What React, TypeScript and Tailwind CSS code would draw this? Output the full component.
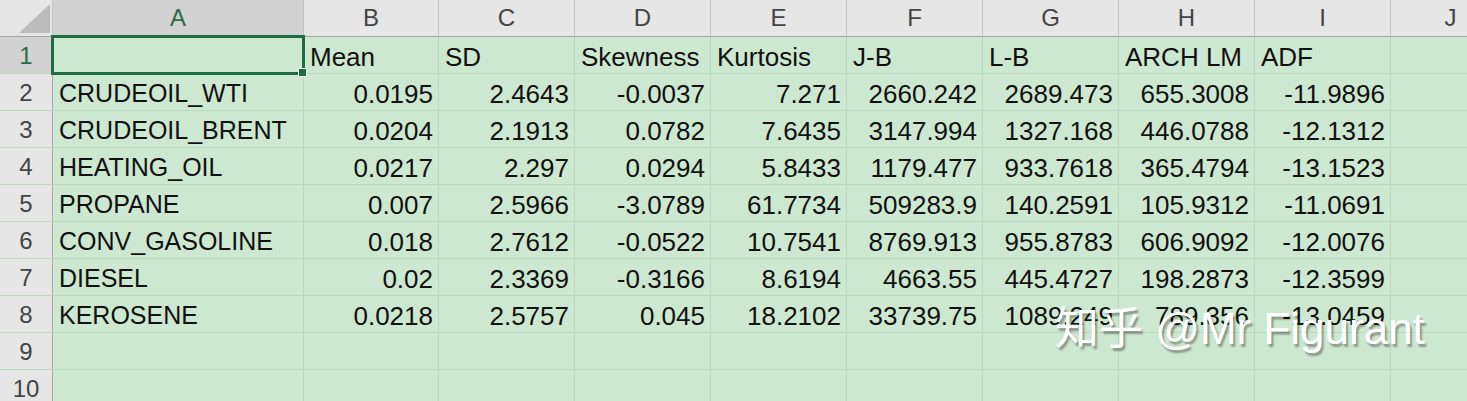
import React from "react";

const cols = ["A", "B", "C", "D", "E", "F", "G", "H", "I", "J"];
const widths = ["w-[251px]", "w-[135px]", "w-[136px]", "w-[136px]", "w-[136px]", "w-[136px]", "w-[136px]", "w-[136px]", "w-[136px]", "w-[120px]"];

const header = ["", "Mean", "SD", "Skewness", "Kurtosis", "J-B", "L-B", "ARCH LM", "ADF", ""];
const data: string[][] = [
  ["CRUDEOIL_WTI", "0.0195", "2.4643", "-0.0037", "7.271", "2660.242", "2689.473", "655.3008", "-11.9896"],
  ["CRUDEOIL_BRENT", "0.0204", "2.1913", "0.0782", "7.6435", "3147.994", "1327.168", "446.0788", "-12.1312"],
  ["HEATING_OIL", "0.0217", "2.297", "0.0294", "5.8433", "1179.477", "933.7618", "365.4794", "-13.1523"],
  ["PROPANE", "0.007", "2.5966", "-3.0789", "61.7734", "509283.9", "140.2591", "105.9312", "-11.0691"],
  ["CONV_GASOLINE", "0.018", "2.7612", "-0.0522", "10.7541", "8769.913", "955.8783", "606.9092", "-12.0076"],
  ["DIESEL", "0.02", "2.3369", "-0.3166", "8.6194", "4663.55", "445.4727", "198.2873", "-12.3599"],
  ["KEROSENE", "0.0218", "2.5757", "0.045", "18.2102", "33739.75", "1089.249", "789.356", "-13.0459"],
];

const font = { fontFamily: '"Liberation Sans", "Noto Sans CJK SC", sans-serif' };

function RowHeader({ n, selected }: { n: number; selected?: boolean }) {
  return (
    <div
      className={`w-[53px] shrink-0 h-full flex items-center justify-center border-r border-[#a8a8a8] text-[24px] pt-[2px] ${
        selected ? "bg-[#d2d2d2] text-[#2b6b46]" : "bg-[#e6e6e6] text-[#444]"
      }`}
    >
      {n}
    </div>
  );
}

export default function App() {
  const rows: string[][] = [header.slice(0, 9), ...data, [], []];
  return (
    <div className="relative w-[1467px] h-[401px] overflow-hidden bg-[#cde8d0] text-[#111]" style={font}>
      {/* column header row */}
      <div className="flex h-[37px] border-b border-[#a3a3a3] bg-[#e6e6e6]">
        <div className="relative w-[53px] shrink-0 h-full border-r border-[#c4c4c4]">
          <svg className="absolute left-0 top-0" width="52" height="36" viewBox="0 0 52 36">
            <polygon points="19,33 50,33 50,4" fill="#bcbcbc" />
          </svg>
        </div>
        {cols.map((c, i) => (
          <div
            key={c}
            className={`${widths[i]} shrink-0 h-full flex items-center justify-center border-r border-[#c4c4c4] text-[24px] ${
              i === 0 ? "bg-[#d2d2d2] text-[#2b6b46]" : "text-[#444]"
            }`}
          >
            {c}
          </div>
        ))}
      </div>

      {rows.map((r, ri) => (
        <div key={ri} className="flex h-[37px] border-b border-[#b9d8bd]">
          <div className="h-full flex">
            <RowHeader n={ri + 1} selected={ri === 0} />
          </div>
          {widths.map((w, ci) => {
            const v = r[ci] ?? "";
            const right = ri > 0 && ci > 0;
            return (
              <div
                key={ci}
                className={`${w} shrink-0 h-full flex items-center pt-[4px] border-r border-[#b9d8bd] whitespace-nowrap ${
                  ci === 0 ? "text-[25px]" : "text-[26px]"
                } ${right ? "justify-end pr-[5px]" : "justify-start pl-[6px]"}`}
              >
                {v}
              </div>
            );
          })}
        </div>
      ))}

      {/* selection box on A1 */}
      <div className="absolute left-[51px] top-[35px] w-[254px] h-[40px] border-[3px] border-[#1f6b42]" />
      <div className="absolute left-[298px] top-[68px] w-[9px] h-[9px] bg-[#1f6b42] border border-[#e8f3ea]" />

      {/* watermark */}
      <div
        className="absolute left-[1055px] top-[307px] text-[44px] text-white whitespace-nowrap leading-none [text-shadow:2px_3px_2px_rgba(0,0,0,0.35)]"
        style={{ fontFamily: '"Liberation Sans", "Noto Sans CJK SC", sans-serif' }}
      >
        知乎 @Mr Figurant
      </div>
    </div>
  );
}
